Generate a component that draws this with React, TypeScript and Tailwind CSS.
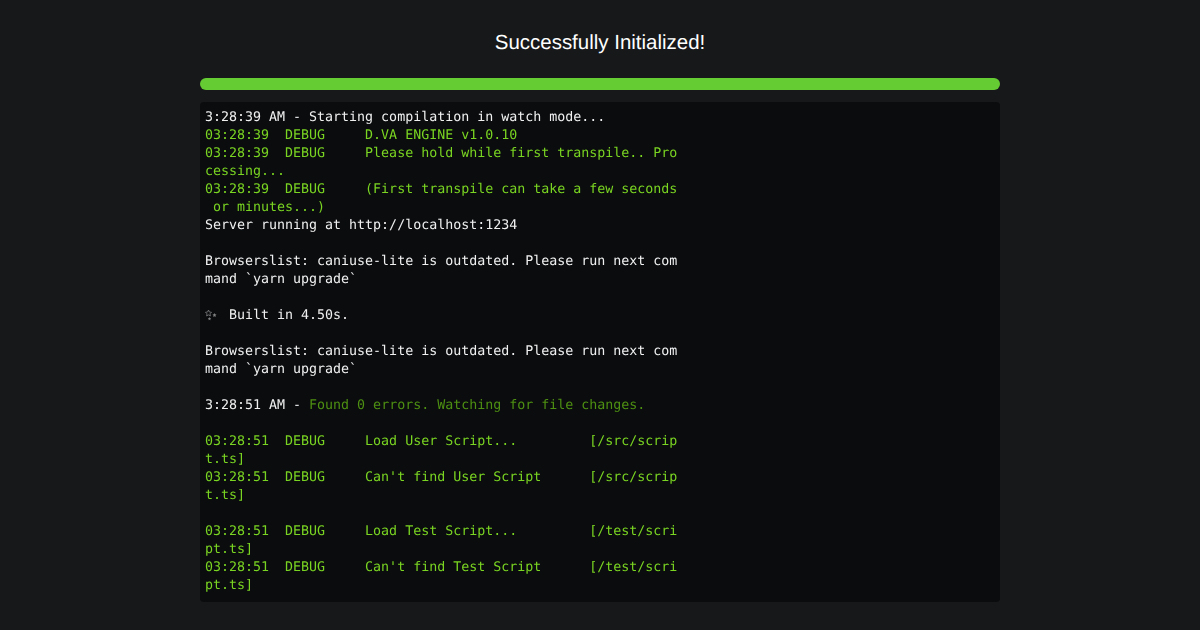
const green = 'text-[#7ad422]';

type Line = { text?: string; color?: string };

const lines: Line[] = [
  { text: '3:28:39 AM - Starting compilation in watch mode...' },
  { text: '03:28:39  DEBUG     D.VA ENGINE v1.0.10', color: green },
  { text: '03:28:39  DEBUG     Please hold while first transpile.. Pro', color: green },
  { text: 'cessing...', color: green },
  { text: '03:28:39  DEBUG     (First transpile can take a few seconds', color: green },
  { text: ' or minutes...)', color: green },
  { text: 'Server running at http://localhost:1234' },
  {},
  { text: 'Browserslist: caniuse-lite is outdated. Please run next com' },
  { text: 'mand `yarn upgrade`' },
  {},
  { text: 'BUILT' },
  {},
  { text: 'Browserslist: caniuse-lite is outdated. Please run next com' },
  { text: 'mand `yarn upgrade`' },
  {},
  { text: 'FOUND' },
  {},
  { text: '03:28:51  DEBUG     Load User Script...         [/src/scrip', color: green },
  { text: 't.ts]', color: green },
  { text: "03:28:51  DEBUG     Can't find User Script      [/src/scrip", color: green },
  { text: 't.ts]', color: green },
  {},
  { text: '03:28:51  DEBUG     Load Test Script...         [/test/scri', color: green },
  { text: 'pt.ts]', color: green },
  { text: "03:28:51  DEBUG     Can't find Test Script      [/test/scri", color: green },
  { text: 'pt.ts]', color: green },
];

const Sparkles = () => (
  <span className="inline-block w-[8px] h-[18px] align-top">
    <svg width="13" height="18" viewBox="0 0 13 18" className="overflow-visible">
      <path d="M3.500 3l.9 2 2.100.3-1.500 1.500.4 2.100-1.900-1-1.900 1 .4-2.100L.5 5.300 2.600 5z" fill="none" stroke="#808080" strokeWidth="0.8" />
      <path d="M9.500 6l.6 1.300 1.400.2-1 1 .2 1.400-1.200-.7-1.200.7.2-1.400-1-1 1.400-.2z" fill="#808080" />
      <path d="M4.500 10l.5 1.100 1.200.2-.9.8.2 1.200-1-.6-1 .6.2-1.200-.9-.8 1.200-.2z" fill="#808080" />
    </svg>
  </span>
);

export default function App() {
  return (
    <div className="h-[630px] w-full overflow-hidden bg-[#16181a] flex flex-col items-center font-['Liberation_Sans',sans-serif] [text-rendering:geometricPrecision]">
      <h1 className="mt-[31px] h-[24px] text-[20.48px] leading-[24px] text-white">Successfully Initialized!</h1>
      <div className="mt-[23px] h-[12px] w-[800px] rounded-[6px] bg-[#66cc33]" />
      <div className="mt-[12px] h-[500px] w-[800px] rounded-[4px] bg-[#0a0c0e] px-[5px] pt-[7px] pb-[5px]">
        <div className="will-change-transform font-['DejaVu_Sans_Mono',monospace] text-[13.3px] leading-[18px] text-[#f0f0f0]">
          {lines.map((line, i) => (
            <div key={i} className={`h-[18px] whitespace-pre ${line.color ?? ''}`}>
              {line.text === 'FOUND' ? (
                <>
                  3:28:51 AM - <span className="text-[#4e9012]">Found 0 errors. Watching for file changes.</span>
                </>
              ) : line.text === 'BUILT' ? (
                <>
                  <Sparkles />
                  {'  Built in 4.50s.'}
                </>
              ) : (
                line.text
              )}
            </div>
          ))}
        </div>
      </div>
    </div>
  );
}
